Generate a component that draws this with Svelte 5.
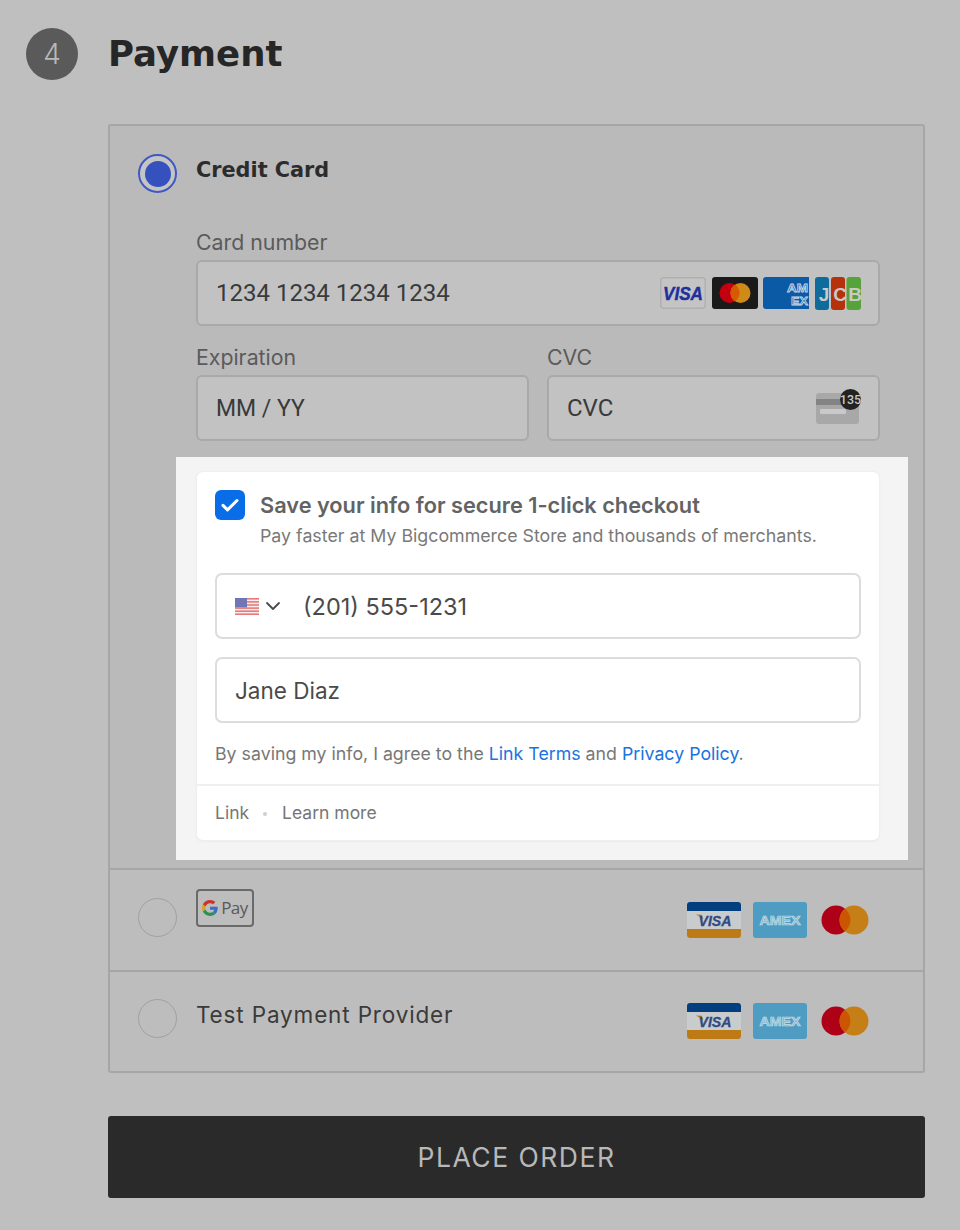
<script>
  const cardRows = [
    { id: 'gpay', label: '' },
    { id: 'test', label: 'Test Payment Provider' }
  ];
</script>

<div class="page">
  <header class="head">
    <span class="step">4</span>
    <h1>Payment</h1>
  </header>

  <section class="panel">
    <div class="credit">
      <div class="credit-title">
        <span class="radio on"><span class="dot"></span></span>
        <span class="credit-label">Credit Card</span>
      </div>

      <div class="fields">
        <label class="field-label" for="cn">Card number</label>
        <div class="input" id="cn">
          <span>1234 1234 1234 1234</span>
          <span class="brands">
            <svg class="b-visa" width="46" height="32" viewBox="0 0 46 32">
              <rect x=".75" y=".75" width="44.5" height="30.5" rx="3" fill="#c4c4c4" stroke="#b0b0b0" stroke-width="1.5"/>
              <text x="23" y="22.5" text-anchor="middle" font-family="Liberation Sans, sans-serif" font-weight="700" font-style="italic" font-size="18.5" textLength="40" lengthAdjust="spacingAndGlyphs" fill="#1f2f9c" stroke="#1f2f9c" stroke-width=".4">VISA</text>
            </svg>
            <svg width="46" height="32" viewBox="0 0 46 32">
              <rect width="46" height="32" rx="3" fill="#1a1a1a"/>
              <circle cx="17.5" cy="16" r="10" fill="#c40010"/>
              <circle cx="28.5" cy="16" r="10" fill="#cf8a17"/>
              <path d="M23 7.600a10 10 0 0 1 0 16.800a10 10 0 0 1 0-16.800z" fill="#d65a00"/>
            </svg>
            <svg width="46" height="32" viewBox="0 0 46 32">
              <path d="M3 0h43v32H3a3 3 0 0 1-3-3V3a3 3 0 0 1 3-3z" fill="#0b5aa5"/>
              <text x="24" y="14.500" font-family="Liberation Sans, sans-serif" font-weight="700" font-size="11.500" textLength="21" lengthAdjust="spacingAndGlyphs" fill="#0b5aa5" stroke="#c7d9ea" stroke-width=".8">AM</text>
              <text x="28" y="27.500" font-family="Liberation Sans, sans-serif" font-weight="700" font-size="11.500" textLength="17" lengthAdjust="spacingAndGlyphs" fill="#0b5aa5" stroke="#c7d9ea" stroke-width=".8">EX</text>
            </svg>
            <svg class="b-jcb" width="46" height="33" viewBox="0 0 46 33">
              <rect x="0" y="0" width="14" height="33" rx="3" fill="#0e6b9c"/>
              <rect x="16" y="0" width="14" height="33" rx="3" fill="#b5320a"/>
              <rect x="31.500" y="0" width="14.500" height="33" rx="3" fill="#55a33a"/>
              <text x="9" y="24" text-anchor="middle" font-family="Liberation Sans, sans-serif" font-weight="700" font-size="19" fill="#c9c9c9">J</text>
              <text x="25" y="24" text-anchor="middle" font-family="Liberation Sans, sans-serif" font-weight="700" font-size="19" fill="#c9c9c9">C</text>
              <text x="40" y="24" text-anchor="middle" font-family="Liberation Sans, sans-serif" font-weight="700" font-size="19" fill="#c9c9c9">B</text>
            </svg>
          </span>
        </div>

        <div class="split">
          <div class="col">
            <label class="field-label" for="ex">Expiration</label>
            <div class="input" id="ex"><span class="mm">MM / YY</span></div>
          </div>
          <div class="col">
            <label class="field-label" for="cv">CVC</label>
            <div class="input" id="cv">
              <span>CVC</span>
              <svg class="cvc" width="46" height="36" viewBox="0 0 46 36">
                <rect x="0" y="4" width="43" height="31" rx="3" fill="#a8a8a8"/>
                <rect x="0" y="10" width="43" height="6" fill="#848484"/>
                <rect x="4" y="20" width="26" height="5" rx="1" fill="#c9c9c9"/>
                <circle cx="34.5" cy="10.5" r="10.5" fill="#222"/>
                <text x="34.5" y="14.8" text-anchor="middle" font-family="Roboto, sans-serif" font-weight="500" font-size="12.500" fill="#c8c8c8">135</text>
              </svg>
            </div>
          </div>
        </div>
      </div>

      <div class="link-wrap">
        <div class="link-card">
          <div class="link-main">
            <div class="save">
              <span class="check">
                <svg width="20" height="16" viewBox="0 0 20 16"><path d="M3 8.400l4.500 4.500L17 3.500" fill="none" stroke="#fff" stroke-width="3" stroke-linecap="round" stroke-linejoin="round"/></svg>
              </span>
              <div>
                <div class="save-title">Save your info for secure 1-click checkout</div>
                <div class="save-sub">Pay faster at My Bigcommerce Store and thousands of merchants.</div>
              </div>
            </div>
            <div class="link-input phone">
              <svg class="flag" width="24" height="17" viewBox="0 0 24 17">
                <rect width="24" height="17" fill="#f6eeee"/>
                <g fill="#e77a7a">
                  <rect y="0" width="24" height="1.6"/><rect y="3.1" width="24" height="1.6"/><rect y="6.2" width="24" height="1.6"/><rect y="9.3" width="24" height="1.6"/><rect y="12.4" width="24" height="1.6"/><rect y="15.4" width="24" height="1.6"/>
                </g>
                <rect width="12" height="9.3" fill="#7075b5"/>
              </svg>
              <svg class="chev" width="16" height="10" viewBox="0 0 16 10"><path d="M2 2l6 6 6-6" fill="none" stroke="#4a4a4a" stroke-width="1.8" stroke-linecap="round" stroke-linejoin="round"/></svg>
              <span class="phone-num">(201) 555-1231</span>
            </div>
            <div class="link-input name">Jane Diaz</div>
            <p class="terms">By saving my info, I agree to the <a href="#t">Link Terms</a> and <a href="#p">Privacy Policy</a>.</p>
          </div>
          <div class="link-foot">
            <span>Link</span><span class="sep"></span><span>Learn more</span>
          </div>
        </div>
      </div>
    </div>

    {#each cardRows as row}
      <div class="method">
        <span class="radio"></span>
        {#if row.id === 'gpay'}
          <span class="gpay">
            <svg width="16" height="16" viewBox="0 0 48 48">
              <path fill="#c8352b" d="M24 9.500c3.500 0 6.700 1.200 9.200 3.600l6.900-6.900C35.900 2.400 30.500 0 24 0 14.600 0 6.500 5.400 2.600 13.200l8 6.200C12.400 13.700 17.700 9.500 24 9.500z"/>
              <path fill="#3a6fc4" d="M47 24.500c0-1.600-.1-3.100-.4-4.500H24v9h12.900c-.6 3-2.200 5.400-4.700 7.100l7.700 6C44.400 37.900 47 31.800 47 24.500z"/>
              <path fill="#d9a21c" d="M10.600 28.600c-.5-1.400-.7-3-.7-4.600s.3-3.200.7-4.600l-8-6.200C.9 16.500 0 20.100 0 24s.9 7.500 2.600 10.800l8-6.200z"/>
              <path fill="#2f9150" d="M24 48c6.500 0 11.900-2.100 15.900-5.900l-7.700-6c-2.200 1.400-4.900 2.300-8.200 2.300-6.300 0-11.600-4.200-13.400-9.900l-8 6.200C6.500 42.600 14.600 48 24 48z"/>
            </svg>
            <span class="gpay-text">Pay</span>
          </span>
        {:else}
          <span class="method-label">{row.label}</span>
        {/if}
        <span class="logos">
          <svg width="54" height="36" viewBox="0 0 54 36">
            <rect width="54" height="36" rx="3" fill="#c9cccc"/>
            <path d="M0 9V3a3 3 0 0 1 3-3h48a3 3 0 0 1 3 3v6z" fill="#033f7f"/>
            <path d="M0 27v6a3 3 0 0 0 3 3h48a3 3 0 0 0 3-3v-6z" fill="#bd7a15"/>
            <path d="M9 12.500l5.500.3 2 4.500z" fill="#bd7a15"/>
            <text x="28" y="23.500" text-anchor="middle" font-family="Liberation Sans, sans-serif" font-style="italic" font-weight="700" font-size="15" textLength="33" lengthAdjust="spacingAndGlyphs" fill="#2e4a85" stroke="#2e4a85" stroke-width=".3">VISA</text>
          </svg>
          <svg width="54" height="36" viewBox="0 0 54 36">
            <rect width="54" height="36" rx="3" fill="#4f9cc2"/>
            <text x="27" y="23" text-anchor="middle" font-family="Liberation Sans, sans-serif" font-weight="700" font-size="13" textLength="41" lengthAdjust="spacingAndGlyphs" fill="#7fb6d2" stroke="#c5dbe5" stroke-width=".7">AMEX</text>
          </svg>
          <svg class="mc" width="48" height="30" viewBox="0 0 48 30">
            <circle cx="15" cy="15" r="14.500" fill="#ae0016"/>
            <circle cx="33" cy="15" r="14.500" fill="#c57f16"/>
            <path d="M24 3.700a14.500 14.500 0 0 1 0 22.600a14.500 14.500 0 0 1 0-22.600z" fill="#cb5500"/>
          </svg>
        </span>
      </div>
    {/each}
  </section>

  <button class="place">PLACE ORDER</button>
</div>

<style>
  :global(body) {
    margin: 0;
    background: #bfbfbf;
  }
  .page {
    height: 1230px;
    padding: 28px 35px 0 26px;
    box-sizing: border-box;
    font-family: Roboto, sans-serif;
    overflow: hidden;
  }
  .head {
    display: flex;
    align-items: center;
    gap: 30px;
    height: 52px;
  }
  .step {
    width: 52px;
    height: 52px;
    border-radius: 50%;
    background: #5a5a5a;
    color: #b9b9b9;
    font-family: Inter, sans-serif;
    font-weight: 300;
    font-size: 28px;
    display: flex;
    align-items: center;
    justify-content: center;
  }
  h1 {
    margin: 0;
    color: #262626;
    font-family: "DejaVu Sans", sans-serif;
    font-size: 35.500px;
    font-weight: 700;
    line-height: 52px;
  }
  .panel {
    margin: 44px 0 0 82px;
    border: 2px solid #a6a6a6;
    border-radius: 3px;
    width: 817px;
    box-sizing: border-box;
  }
  .credit {
    background: #bababa;
    height: 742px;
    border-bottom: 2px solid #a6a6a6;
  }
  .credit-title {
    display: flex;
    align-items: center;
    gap: 19px;
    padding: 28px 0 0 28px;
    height: 39px;
  }
  .radio {
    width: 39px;
    height: 39px;
    box-sizing: border-box;
    flex: none;
    border-radius: 50%;
    border: 1.5px solid #a0a0a0;
    display: flex;
    align-items: center;
    justify-content: center;
  }
  .radio.on {
    border: 2px solid #3f59c4;
    background: #c4c4c4;
  }
  .dot {
    width: 26px;
    height: 26px;
    border-radius: 50%;
    background: #3451bd;
  }
  .credit-label {
    font-family: "DejaVu Sans", sans-serif;
    font-weight: 700;
    font-size: 20.800px;
    color: #2c2c2c;
    margin-top: -7px;
  }
  .fields {
    padding: 0 43px 0 86px;
    margin-top: 36px;
  }
  .field-label {
    display: block;
    font-family: Inter, sans-serif;
    font-size: 21.300px;
    line-height: 26px;
    color: #5b5b5b;
    margin-bottom: 5px;
  }
  .input {
    height: 66px;
    box-sizing: border-box;
    border: 2px solid #a9a9a9;
    border-radius: 6px;
    background: #c2c2c2;
    display: flex;
    align-items: center;
    justify-content: space-between;
    padding: 0 17px 0 18px;
    font-size: 24px;
    color: #3a3a3a;
  }
  .mm {
    font-size: 23px;
  }
  .brands {
    display: flex;
    gap: 5px;
    align-items: center;
  }
  .brands svg {
    display: block;
  }
  .b-visa {
    margin-right: 1px;
  }
  .b-jcb {
    margin-left: 1px;
  }
  .split {
    display: grid;
    grid-template-columns: 333px 333px;
    gap: 18px;
    margin-top: 18px;
  }
  .cvc {
    margin-top: -2px;
    margin-right: -1px;
  }
  .link-wrap {
    margin: 16px 15px 0 66px;
    background: #f4f4f4;
    height: 403px;
    padding: 15px 29px 0 21px;
    box-sizing: border-box;
  }
  .link-card {
    background: #fff;
    height: 368px;
    border-radius: 6px;
    box-shadow: 0 0 0 1px #efefef, 0 1px 3px rgba(0,0,0,.08);
    font-family: Inter, sans-serif;
    display: flex;
    flex-direction: column;
  }
  .link-main {
    padding: 18px 18px 0;
    flex: 1;
  }
  .save {
    display: flex;
    gap: 15px;
  }
  .check {
    width: 30px;
    height: 30px;
    border-radius: 6px;
    background: #0a6de8;
    flex: none;
    display: flex;
    align-items: center;
    justify-content: center;
  }
  .save-title {
    font-size: 21.750px;
    font-weight: 600;
    line-height: 30px;
    color: #636363;
    white-space: nowrap;
  }
  .save-sub {
    font-size: 17.800px;
    line-height: 20px;
    margin-top: 6px;
    color: #797979;
    white-space: nowrap;
  }
  .link-input {
    height: 66px;
    box-sizing: border-box;
    border: 2px solid #dcdcdc;
    border-radius: 7px;
    display: flex;
    align-items: center;
    padding: 0 18px;
    font-size: 22.500px;
    color: #4a4a4a;
    margin-top: 18px;
  }
  .phone {
    margin-top: 27px;
  }
  .phone-num {
    font-size: 23.500px;
  }
  .flag {
    margin-right: 6px;
  }
  .chev {
    margin-right: 22px;
  }
  .terms {
    margin: 20px 0 0;
    font-size: 17.750px;
    line-height: 22px;
    color: #777;
    white-space: nowrap;
  }
  .terms a {
    color: #1a73e0;
    text-decoration: none;
  }
  .link-foot {
    border-top: 2px solid #f0f0f0;
    height: 56px;
    box-sizing: border-box;
    display: flex;
    align-items: center;
    padding: 0 18px 1px;
    font-size: 17.500px;
    color: #767676;
  }
  .sep {
    width: 4px;
    height: 4px;
    border-radius: 50%;
    background: #cfcfcf;
    margin: 2px 15px 0 14px;
  }
  .method {
    height: 102px;
    box-sizing: border-box;
    display: flex;
    align-items: flex-start;
    padding: 28px 54px 0 28px;
    background: #bdbdbd;
    border-bottom: 2px solid #a6a6a6;
    gap: 19px;
  }
  .method:last-child {
    border-bottom: 0;
    height: 99px;
    padding-top: 27px;
  }
  .method-label {
    font-family: Inter, sans-serif;
    font-weight: 400;
    font-size: 22.500px;
    letter-spacing: .85px;
    color: #3a3a3a;
    line-height: 30px;
    margin-top: 1px;
  }
  .gpay {
    width: 58px;
    height: 38px;
    box-sizing: border-box;
    margin-top: -9px;
    border: 2px solid #6a6a6a;
    border-radius: 4px;
    display: flex;
    align-items: center;
    justify-content: center;
    gap: 3px;
  }
  .gpay-text {
    font-family: "Open Sans", sans-serif;
    font-size: 17px;
    letter-spacing: -.5px;
    color: #595959;
    margin-top: -1px;
  }
  .logos {
    margin-left: auto;
    display: flex;
    align-items: center;
    gap: 12px;
    margin-top: 4px;
  }
  .logos svg {
    display: block;
  }
  .mc {
    margin-left: 2px;
  }
  .place {
    display: block;
    margin: 43px 0 0 82px;
    width: 817px;
    height: 82px;
    background: #2a2a2a;
    border: 0;
    border-radius: 3px;
    font-family: Inter, sans-serif;
    font-size: 26.500px;
    letter-spacing: 1.500px;
    color: #b8b8b8;
  }
</style>
